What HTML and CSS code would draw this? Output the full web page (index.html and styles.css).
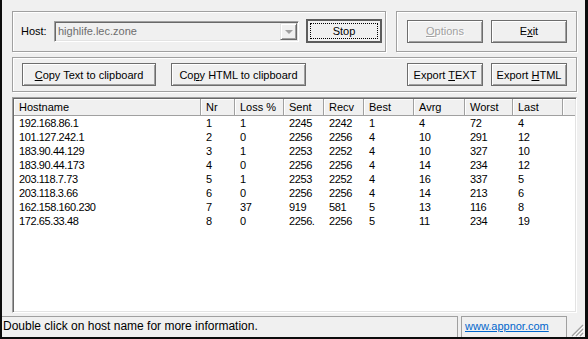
FILE: index.html
```html
<!DOCTYPE html>
<html lang="en">
<head>
    <meta charset="UTF-8">
    <title>WinMTR</title>
    <link rel="stylesheet" href="styles.css">
</head>
<body>

    <div class="window">
        <div class="main">

            <div class="top-row">
                <div class="group host-group">
                    <span class="host-label">Host:</span>
                    <div class="combo">
                        <span class="combo-text">highlife.lec.zone</span>
                        <span class="combo-btn"><span class="arrow"></span></span>
                    </div>
                    <button class="btn btn-default"><span class="focus">Stop</span></button>
                </div>
                <div class="group opt-group">
                    <button class="btn disabled"><u>O</u>ptions</button>
                    <button class="btn">E<u>x</u>it</button>
                </div>
            </div>

            <div class="group actions">
                <button class="btn btn-copy-text"><u>C</u>opy Text to clipboard</button>
                <button class="btn btn-copy-html">Co<u>p</u>y HTML to clipboard</button>
                <button class="btn btn-export">Export <u>T</u>EXT</button>
                <button class="btn">Export <u>H</u>TML</button>
            </div>

            <div class="listview">
                <div class="lv-row lv-header">
                    <div>Hostname</div>
                    <div>Nr</div>
                    <div>Loss %</div>
                    <div>Sent</div>
                    <div>Recv</div>
                    <div>Best</div>
                    <div>Avrg</div>
                    <div>Worst</div>
                    <div>Last</div>
                    <div class="filler"></div>
                </div>
                <div class="lv-row"><div>192.168.86.1</div><div>1</div><div>1</div><div>2245</div><div>2242</div><div>1</div><div>4</div><div>72</div><div>4</div></div>
                <div class="lv-row"><div>101.127.242.1</div><div>2</div><div>0</div><div>2256</div><div>2256</div><div>4</div><div>10</div><div>291</div><div>12</div></div>
                <div class="lv-row"><div>183.90.44.129</div><div>3</div><div>1</div><div>2253</div><div>2252</div><div>4</div><div>10</div><div>327</div><div>10</div></div>
                <div class="lv-row"><div>183.90.44.173</div><div>4</div><div>0</div><div>2256</div><div>2256</div><div>4</div><div>14</div><div>234</div><div>12</div></div>
                <div class="lv-row"><div>203.118.7.73</div><div>5</div><div>1</div><div>2253</div><div>2252</div><div>4</div><div>16</div><div>337</div><div>5</div></div>
                <div class="lv-row"><div>203.118.3.66</div><div>6</div><div>0</div><div>2256</div><div>2256</div><div>4</div><div>14</div><div>213</div><div>6</div></div>
                <div class="lv-row"><div>162.158.160.230</div><div>7</div><div>37</div><div>919</div><div>581</div><div>5</div><div>13</div><div>116</div><div>8</div></div>
                <div class="lv-row"><div>172.65.33.48</div><div>8</div><div>0</div><div>2256.</div><div>2256</div><div>5</div><div>11</div><div>234</div><div>19</div></div>
            </div>

        </div>

        <div class="statusbar">
            <div class="panel panel-msg">Double click on host name for more information.</div>
            <div class="panel panel-link"><a href="#">www.appnor.com</a></div>
            <svg class="grip" width="16" height="16" viewBox="0 0 16 16">
                <path d="M15 4 L4 15 M15 8 L8 15 M15 12 L12 15" stroke="#a0a0a0" stroke-width="1.2"/>
                <path d="M16 5 L5 16 M16 9 L9 16 M16 13 L13 16" stroke="#ffffff" stroke-width="1"/>
            </svg>
        </div>
    </div>

</body>
</html>
```

FILE: styles.css
```css
* {
    box-sizing: border-box;
}

body {
    margin: 0;
    background-color: #0c0c0c;
    font-family: "Liberation Sans", Arial, sans-serif;
    font-size: 11px;
    color: #000;
}

.window {
    width: 583px;
    height: 337px;
    margin-left: 2px;
    background-color: #f0f0f0;
    display: flex;
    flex-direction: column;
}

.main {
    flex: 1;
    display: flex;
    flex-direction: column;
    padding: 11px 8px 0 10px;
}

/* etched group boxes */
.group {
    border: 1px solid #a0a0a0;
    box-shadow: inset 1px 1px 0 #fff, 1px 1px 0 #fff;
    display: flex;
    align-items: center;
}

.top-row {
    display: flex;
    gap: 10px;
    height: 41px;
}

.host-group {
    width: 374px;
    padding: 0 0 1px 8px;
}

.host-label {
    width: 33px;
}

.combo {
    width: 245px;
    height: 21px;
    margin-right: 7px;
    border: 1px solid;
    border-color: #a0a0a0 #fff #fff #a0a0a0;
    box-shadow: inset 1px 1px 0 #696969, inset -1px -1px 0 #e3e3e3;
    display: flex;
    align-items: center;
    padding: 0 1px 0 3px;
}

.combo-text {
    flex: 1;
    color: #6d6d6d;
}

.combo-btn {
    width: 17px;
    height: 17px;
    border: 1px solid;
    border-color: #e3e3e3 #696969 #696969 #e3e3e3;
    box-shadow: inset 1px 1px 0 #fff, inset -1px -1px 0 #a0a0a0;
    display: flex;
    align-items: center;
    justify-content: center;
}

.arrow {
    width: 0;
    height: 0;
    border-left: 4px solid transparent;
    border-right: 4px solid transparent;
    border-top: 4px solid #a0a0a0;
    margin-top: 1px;
}

.btn {
    height: 23px;
    width: 76px;
    padding: 0;
    font-family: inherit;
    font-size: 11px;
    color: #000;
    background-color: #f0f0f0;
    border: 1px solid #6d6d6d;
    box-shadow: inset 1px 1px 0 #fff, inset -1px -1px 0 #a0a0a0;
    flex-shrink: 0;
}

.btn u {
    text-decoration: underline;
    text-underline-offset: 1px;
}

.btn-default {
    height: 24px;
    border: 2px solid #5c5c5c;
    box-shadow: none;
    padding: 2px;
}

.btn-default .focus {
    display: flex;
    align-items: center;
    justify-content: center;
    height: 100%;
    border: 1px dotted #000;
}

.disabled {
    color: #a0a0a0;
    text-shadow: 1px 1px 0 #fff;
}

.opt-group {
    width: 181px;
    padding: 0 0 1px 10px;
    gap: 8px;
}

.actions {
    margin-top: 5px;
    height: 35px;
    padding: 0 9px 0 9px;
}

.btn-copy-text {
    width: 134px;
}

.btn-copy-html {
    width: 135px;
    margin-left: 15px;
}

.btn-export {
    margin-left: auto;
    margin-right: 8px;
}

/* list view */
.listview {
    margin-top: 5px;
    height: 216px;
    background-color: #fff;
    border: 1px solid;
    border-color: #a0a0a0 #fff #fff #a0a0a0;
    box-shadow: inset 1px 1px 0 #696969, inset -1px -1px 0 #e3e3e3;
    padding: 1px;
}

.lv-row {
    display: grid;
    grid-template-columns: 187px 34px 49px 40px 40px 50px 51px 48px 50px 1fr;
    height: 14px;
    line-height: 14px;
}

.lv-row div {
    padding-left: 5px;
    white-space: nowrap;
    overflow: hidden;
    letter-spacing: -0.4px;
}

.lv-header {
    height: 17px;
    line-height: 16px;
    background-color: #f0f0f0;
    border-bottom: 1px solid #a0a0a0;
    margin-bottom: 0;
}

.lv-header div {
    letter-spacing: 0;
    border-right: 1px solid #a0a0a0;
    box-shadow: inset 1px 1px 0 #fff;
}

.lv-header .filler {
    border-right: none;
}

/* status bar */
.statusbar {
    margin-top: 3px;
    height: 21px;
    display: flex;
    font-size: 12px;
}

.panel {
    height: 21px;
    border-top: 1px solid #a0a0a0;
    border-right: 1px solid #a0a0a0;
    line-height: 19px;
    white-space: nowrap;
}

.panel-msg {
    width: 456px;
    padding-left: 1px;
}

.panel-link {
    width: 106px;
    margin-left: 3px;
    border-left: 1px solid #a0a0a0;
    padding-left: 3px;
    font-size: 11px;
}

.panel-link a {
    color: #0066cc;
}

.grip {
    margin-left: auto;
    align-self: flex-end;
    margin-right: 1px;
}
```
